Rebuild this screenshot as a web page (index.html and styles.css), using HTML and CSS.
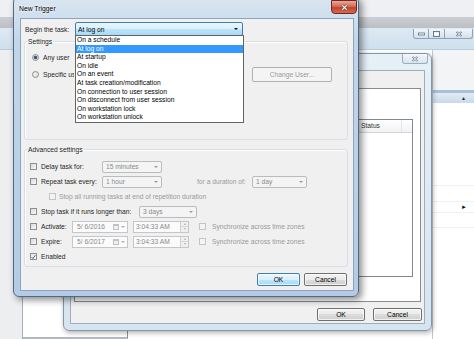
FILE: index.html
```html
<!DOCTYPE html>
<html lang="en">
<head>
  <meta charset="UTF-8" />
  <meta name="viewport" content="width=device-width, initial-scale=1.0" />
  <title>New Trigger</title>
  <link rel="stylesheet" href="styles.css">
</head>
<body>

  <div class="desktop">

    <!-- main scheduler window at the back -->
    <div class="main-win">
      <div class="main-top"></div>
      <div class="main-strip"></div>
      <div class="main-title">
        <div class="caption">
          <span class="cap-btn cap-min">
            <svg width="7" height="4" viewBox="0 0 7 4"><rect x="0.5" y="1" width="6" height="2" fill="#fff" stroke="#5d6f82" stroke-width="0.8"/></svg>
          </span>
          <span class="cap-btn cap-max">
            <svg width="7" height="6" viewBox="0 0 7 6"><rect x="0.5" y="0.5" width="6" height="5" fill="none" stroke="#5d6f82" stroke-width="0.9"/><rect x="1.5" y="1.8" width="4" height="2.8" fill="#fff"/></svg>
          </span>
          <span class="cap-btn cap-close">
            <svg width="8" height="6" viewBox="0 0 8 6"><path d="M1.5 0.8 L6.5 5.2 M6.5 0.8 L1.5 5.2" stroke="#5d6f82" stroke-width="1.6"/><path d="M1.5 0.8 L6.5 5.2 M6.5 0.8 L1.5 5.2" stroke="#fff" stroke-width="0.7"/></svg>
          </span>
        </div>
      </div>
      <div class="main-body">
        <div class="main-nav"></div>
        <div class="main-center">
          <div class="main-status"></div>
        </div>
        <div class="main-side">
          <div class="side-top"></div>
          <div class="side-head"><span class="side-up">&#9650;</span></div>
          <div class="side-list">
            <div class="side-row" style="height: 83px"></div>
            <div class="side-row" style="height: 16px"></div>
            <div class="side-row arrow-row" style="height: 11px"><span>&#9658;</span></div>
            <div class="side-row" style="height: 15px"></div>
          </div>
        </div>
      </div>
    </div>

    <!-- Create Task window -->
    <div class="task-win">
      <div class="task-title">
        <span class="task-close">
          <svg width="8" height="6" viewBox="0 0 8 6"><path d="M1.5 0.8 L6.5 5.2 M6.5 0.8 L1.5 5.2" stroke="#6b7c8e" stroke-width="1.6"/><path d="M1.5 0.8 L6.5 5.2 M6.5 0.8 L1.5 5.2" stroke="#fff" stroke-width="0.7"/></svg>
        </span>
      </div>
      <div class="task-client">
        <div class="tab-strip">
          <span class="tab">General</span>
          <span class="tab on">Triggers</span>
          <span class="tab">Actions</span>
        </div>
        <div class="tab-page">
          <div class="list-view">
            <div class="lv-head">
              <span class="lv-col c1">Trigger</span>
              <span class="lv-col c2">Details</span>
              <span class="lv-col c3">Status</span>
              <span class="lv-col c4"></span>
            </div>
          </div>
        </div>
        <div class="task-buttons">
          <button class="btn task-ok">OK</button>
          <button class="btn task-cancel">Cancel</button>
        </div>
      </div>
    </div>

    <!-- New Trigger dialog -->
    <div class="dialog">
      <div class="dlg-title">
        <span class="dlg-caption">New Trigger</span>
        <span class="dlg-close">
          <svg width="9" height="7" viewBox="0 0 9 7"><path d="M2 1 L7 6 M7 1 L2 6" stroke="#5a1d12" stroke-width="2.4"/><path d="M2 1 L7 6 M7 1 L2 6" stroke="#fff" stroke-width="1.2"/></svg>
        </span>
      </div>

      <div class="dlg-client">
        <div class="begin-row">
          <span class="begin-label">Begin the task:</span>
          <div class="combo focus">
            <span>At log on</span>
            <i class="arrow"></i>
          </div>
        </div>

        <fieldset class="group settings">
          <legend>Settings</legend>
          <div class="radio-row first">
            <span class="radio on"></span>
            <span>Any user</span>
          </div>
          <div class="radio-row second">
            <span class="radio"></span>
            <span class="clip-label">Specific user or group:</span>
            <button class="btn change-user" disabled>Change User...</button>
          </div>
        </fieldset>

        <fieldset class="group advanced">
          <legend>Advanced settings</legend>

          <div class="adv-row">
            <span class="check"></span>
            <span class="cb-label w-short">Delay task for:</span>
            <div class="combo off w60"><span>15 minutes</span><i class="arrow"></i></div>
          </div>

          <div class="adv-row">
            <span class="check"></span>
            <span class="cb-label w-short">Repeat task every:</span>
            <div class="combo off w60"><span>1 hour</span><i class="arrow"></i></div>
            <span class="dim duration-label">for a duration of:</span>
            <div class="combo off w55"><span>1 day</span><i class="arrow"></i></div>
          </div>

          <div class="adv-row indent">
            <span class="check off"></span>
            <span class="cb-label dim tight">Stop all running tasks at end of repetition duration</span>
          </div>

          <div class="adv-row">
            <span class="check"></span>
            <span class="cb-label w-long">Stop task if it runs longer than:</span>
            <div class="combo off w58"><span>3 days</span><i class="arrow"></i></div>
          </div>

          <div class="adv-row">
            <span class="check"></span>
            <span class="cb-label w-date">Activate:</span>
            <div class="field date"><span>5/ 6/2016</span><i class="cal"></i><i class="arrow"></i></div>
            <div class="field time"><span>3:04:33 AM</span><i class="spin"><b></b><b class="down"></b></i></div>
            <span class="check off sync"></span>
            <span class="dim sync-label">Synchronize across time zones</span>
          </div>

          <div class="adv-row">
            <span class="check"></span>
            <span class="cb-label w-date">Expire:</span>
            <div class="field date"><span>5/ 6/2017</span><i class="cal"></i><i class="arrow"></i></div>
            <div class="field time"><span>3:04:33 AM</span><i class="spin"><b></b><b class="down"></b></i></div>
            <span class="check off sync"></span>
            <span class="dim sync-label">Synchronize across time zones</span>
          </div>

          <div class="adv-row">
            <span class="check on">
              <svg width="6" height="6" viewBox="0 0 6 6"><path d="M0.8 3.2 L2.3 4.9 L5.3 0.8" fill="none" stroke="#3a4f86" stroke-width="1.1"/></svg>
            </span>
            <span class="cb-label">Enabled</span>
          </div>
        </fieldset>

        <div class="dlg-buttons">
          <button class="btn default">OK</button>
          <button class="btn">Cancel</button>
        </div>

        <ul class="dropdown">
          <li>On a schedule</li>
          <li class="sel">At log on</li>
          <li>At startup</li>
          <li>On idle</li>
          <li>On an event</li>
          <li>At task creation/modification</li>
          <li>On connection to user session</li>
          <li>On disconnect from user session</li>
          <li>On workstation lock</li>
          <li>On workstation unlock</li>
        </ul>
      </div>
    </div>

  </div>

</body>
</html>
```

FILE: styles.css
```css
* {
  box-sizing: border-box;
}

body {
  margin: 0;
  width: 474px;
  height: 339px;
  overflow: hidden;
  font-family: "Liberation Sans", Arial, sans-serif;
  font-size: 6.7px;
  color: #1e1e1e;
  background: #f0f0f0;
}

.desktop {
  position: relative;
  width: 474px;
  height: 339px;
  overflow: hidden;
}

/* ---------- buttons ---------- */

.btn {
  font: inherit;
  height: 13px;
  width: 43px;
  padding: 0;
  color: #000;
  white-space: nowrap;
  border: 1px solid #707070;
  border-radius: 2px;
  background: linear-gradient(#f2f2f2 0%, #ebebeb 50%, #dddddd 50%, #cfcfcf 100%);
  box-shadow: inset 0 0 0 1px rgba(255, 255, 255, 0.7);
}

.btn.default {
  border-color: #3c7fb1;
  background: linear-gradient(#eaf6fd 0%, #d9f0fc 50%, #bee6fd 50%, #a7d9f5 100%);
}

.btn:disabled {
  border-color: #adb2b5;
  background: #f4f4f4;
  color: #9a9a9a;
  box-shadow: none;
}

/* ---------- main window (back) ---------- */

.main-win {
  position: absolute;
  inset: 0;
  display: flex;
  flex-direction: column;
  background: #f0f0f0;
}

.main-top {
  height: 17px;
  flex: none;
  background: #eef0f3;
}

.main-strip {
  height: 11px;
  flex: none;
  background: linear-gradient(#cbced2, #bcc0c5);
}

.main-title {
  height: 22px;
  flex: none;
  display: flex;
  justify-content: flex-end;
  align-items: flex-start;
  background: linear-gradient(#dde9f3, #cfe0ee);
  border-bottom: 1px solid #b9cadb;
}

.caption {
  display: flex;
  margin: 1px 1px 0 0;
}

.cap-btn {
  height: 10px;
  display: flex;
  align-items: center;
  justify-content: center;
  border: 1px solid #8ea3b8;
  border-top: none;
  background: linear-gradient(#f0f5fa, #d3e1ec);
}

.cap-min {
  width: 16px;
  border-radius: 0 0 0 3px;
}

.cap-max {
  width: 16px;
  border-left: none;
}

.cap-close {
  width: 28px;
  border-left: none;
  border-radius: 0 0 3px 0;
}

.main-body {
  flex: 1;
  display: flex;
}

.main-nav {
  width: 23px;
  background: #eceef0;
  border-right: 1px solid #a9adb2;
}

.main-center {
  flex: 1;
  display: flex;
  flex-direction: column;
  background: #fff;
}

.main-status {
  margin-top: auto;
  width: 105px;
  height: 9px;
  border-right: 1px solid #8d9195;
  border-bottom: 2px solid #b5b9bd;
}

.main-side {
  width: 42px;
  display: flex;
  flex-direction: column;
  border-left: 1px solid #c3c9cf;
}

.side-top {
  height: 40px;
  background: #f2f4f6;
}

.side-head {
  height: 13px;
  display: flex;
  justify-content: flex-end;
  align-items: center;
  padding-right: 8px;
  background: linear-gradient(#e3ecf6, #c9d9ea);
  border-top: 3px solid #a9c0da;
}

.side-up {
  font-size: 5px;
  color: #1b2b3b;
}

.side-list {
  flex: 1;
  background: #fff;
}

.side-row {
  border-bottom: 1px solid #eef0f2;
}

.arrow-row {
  display: flex;
  justify-content: flex-end;
  align-items: center;
  padding-right: 7px;
  font-size: 6px;
  color: #111;
}

/* ---------- Create Task window ---------- */

.task-win {
  position: absolute;
  left: 63px;
  top: 53px;
  width: 369px;
  height: 278px;
  display: flex;
  flex-direction: column;
  padding: 0 6px 6px 6px;
  border: 1px solid #8196ab;
  border-radius: 6px;
  background: linear-gradient(#e6f0f7, #d6e4ef);
  box-shadow: 1px 2px 5px rgba(0, 0, 0, 0.3);
}

.task-title {
  height: 16px;
  flex: none;
  display: flex;
  justify-content: flex-end;
  align-items: flex-start;
}

.task-close {
  width: 26px;
  height: 10px;
  margin-right: -3px;
  display: flex;
  align-items: center;
  justify-content: center;
  border: 1px solid #9aacbe;
  border-top: none;
  border-radius: 0 0 3px 3px;
  background: linear-gradient(#f2f7fa, #d9e5ee);
}

.task-client {
  flex: 1;
  display: flex;
  flex-direction: column;
  padding: 0 3px;
  background: #f0f0f0;
  border: 1px solid #a0adba;
}

.tab-strip {
  height: 17px;
  flex: none;
  display: flex;
  align-items: flex-end;
  padding-left: 2px;
}

.tab {
  height: 13px;
  padding: 2px 6px 0;
  border: 1px solid #898c95;
  border-bottom: none;
  background: linear-gradient(#f2f2f2, #e0e0e0);
}

.tab.on {
  height: 15px;
  background: #fff;
}

.tab-page {
  height: 214px;
  flex: none;
  padding: 30px 7px 0 7px;
  background: #fff;
  border: 1px solid #898c95;
}

.list-view {
  height: 158px;
  border: 1px solid #828790;
  background: #fff;
}

.lv-head {
  height: 13px;
  display: flex;
  background: linear-gradient(#ffffff, #f1f2f4);
  border-bottom: 1px solid #d5d5d5;
}

.lv-col {
  line-height: 12px;
  padding-left: 2px;
  border-right: 1px solid #e3e4e6;
  color: #333;
}

.lv-col.c1 {
  width: 190px;
}

.lv-col.c2 {
  width: 86px;
}

.lv-col.c3 {
  width: 43px;
}

.lv-col.c4 {
  flex: 1;
  border-right: none;
}

.task-buttons {
  display: flex;
  justify-content: flex-end;
  gap: 8px;
  margin: 6px -1px 0 0;
}

.btn.task-ok {
  width: 48px;
}

.btn.task-cancel {
  width: 49px;
}

/* ---------- New Trigger dialog ---------- */

.dialog {
  position: absolute;
  left: 13px;
  top: -4px;
  width: 346px;
  height: 301px;
  display: flex;
  flex-direction: column;
  padding: 0 4px 5px 6px;
  border: 1px solid #4f6987;
  border-radius: 6px;
  background: linear-gradient(#dae6f1 0%, #c2d6ea 15%, #b3cbe4 100%);
  box-shadow: 3px 3px 7px rgba(0, 0, 0, 0.45);
}

.dlg-title {
  height: 21px;
  flex: none;
  display: flex;
  justify-content: space-between;
  align-items: flex-start;
}

.dlg-caption {
  margin: 7px 0 0 -1px;
  font-size: 6.8px;
  line-height: 9px;
  color: #000;
  text-shadow: 0 0 3px #fff, 0 0 3px #fff;
}

.dlg-close {
  width: 26px;
  height: 14px;
  margin: 3px -3px 0 0;
  display: flex;
  align-items: center;
  justify-content: center;
  border: 1px solid #6b2b22;
  border-radius: 0 0 4px 4px;
  background: linear-gradient(#eba898 0%, #d4624c 50%, #c2432c 55%, #d66a4c 100%);
}

.dlg-client {
  position: relative;
  flex: 1;
  display: flex;
  flex-direction: column;
  padding: 3px 5px 0 3px;
  background: #f0f0f0;
  border: 1px solid #8da4bc;
}

.begin-row {
  display: flex;
  align-items: center;
  height: 14px;
}

.begin-label {
  width: 51px;
  padding-left: 1px;
}

.group {
  margin: 0;
  min-width: 0;
  padding: 0 0 0 5px;
  border: 1px solid #d5dfe5;
  border-radius: 3px;
  box-shadow: inset 1px 1px 0 #fff;
}

.group legend {
  margin-left: -3px;
  padding: 0 1px;
  line-height: 9px;
}

.settings {
  margin-top: 1px;
  height: 103px;
}

.radio-row {
  display: flex;
  align-items: center;
  gap: 4px;
  padding-left: 2px;
}

.radio-row.first {
  height: 13px;
  margin-top: 5px;
}

.radio-row.second {
  height: 15px;
  margin-top: 3px;
}

.clip-label {
  width: 31px;
  overflow: hidden;
  white-space: nowrap;
}

.radio {
  width: 7px;
  height: 7px;
  flex: none;
  border: 1px solid #8e8f8f;
  border-radius: 50%;
  background: radial-gradient(circle at 40% 40%, #f4f4f4, #d3d3d3);
}

.radio.on {
  background: radial-gradient(circle, #2d4770 0, #4d6a8e 1.6px, #e9e9e9 2.2px);
}

.btn.change-user {
  margin: 0 15px 0 auto;
  width: 80px;
  height: 15px;
}

.advanced {
  margin-top: 5px;
  padding-top: 5px;
  padding-bottom: 2px;
}

.adv-row {
  display: flex;
  align-items: center;
  height: 15px;
}

.adv-row.indent {
  padding-left: 19px;
}

.check {
  width: 7px;
  height: 7px;
  flex: none;
  display: flex;
  align-items: center;
  justify-content: center;
  border: 1px solid #8e8f8f;
  background: linear-gradient(135deg, #d9d9d9, #f8f8f8);
}

.check.off {
  border-color: #c5c5c5;
  background: #f4f4f4;
}

.check.on {
  background: linear-gradient(135deg, #e4e4e4, #ffffff);
}

.cb-label {
  margin-left: 4px;
  white-space: nowrap;
}

.cb-label.tight {
  margin-left: 3px;
}

.w-short {
  width: 61px;
}

.w-long {
  width: 98px;
}

.w-date {
  width: 31px;
}

.dim {
  color: #9a9a9a;
  white-space: nowrap;
}

.duration-label {
  width: 55px;
  margin-left: 35px;
}

.combo {
  height: 12px;
  flex: none;
  display: flex;
  align-items: center;
  padding-left: 3px;
  border: 1px solid #b9bcbf;
  border-radius: 2px;
  background: #f4f4f4;
  color: #8a8a8a;
}

.combo .arrow {
  margin: 0 3px 0 auto;
}

.arrow {
  width: 0;
  height: 0;
  border-left: 2px solid transparent;
  border-right: 2px solid transparent;
  border-top: 2.5px solid #9a9a9a;
}

.combo.focus {
  width: 168px;
  height: 14px;
  padding-left: 2px;
  border-color: #3c7fb1;
  background: linear-gradient(#eaf6fd 0%, #d9f0fc 50%, #bee6fd 50%, #a7d9f5 100%);
  color: #000;
}

.combo.focus .arrow {
  border-top-color: #111;
  margin-right: 4px;
}

.w60 {
  width: 60px;
}

.w55 {
  width: 55px;
}

.w58 {
  width: 58px;
}

.field {
  width: 56px;
  height: 12px;
  flex: none;
  display: flex;
  align-items: center;
  padding-left: 4px;
  border: 1px solid #c3c6ca;
  background: #fbfbfb;
  color: #8a8a8a;
}

.field.time {
  margin-left: 5px;
  padding-left: 2px;
}

.cal {
  width: 6px;
  height: 6px;
  margin: 0 2px 0 auto;
  border: 1px solid #c2c2c2;
  border-top-width: 2px;
  background: #f0f0f0;
}

.field .arrow {
  margin-right: 2px;
  border-top-color: #b0b0b0;
}

.spin {
  margin-left: auto;
  width: 8px;
  height: 10px;
  display: flex;
  flex-direction: column;
  border-left: 1px solid #d0d0d0;
}

.spin b {
  flex: 1;
  display: flex;
  align-items: center;
  justify-content: center;
  border-bottom: 1px solid #d8d8d8;
  background: #f0f0f0;
}

.spin b::after {
  content: "";
  border-left: 1.5px solid transparent;
  border-right: 1.5px solid transparent;
  border-bottom: 2px solid #b0b0b0;
}

.spin b.down {
  border-bottom: none;
}

.spin b.down::after {
  border-bottom: none;
  border-top: 2px solid #b0b0b0;
}

.check.sync {
  margin-left: 10px;
}

.sync-label {
  margin-left: 6px;
}

.dlg-buttons {
  display: flex;
  justify-content: flex-end;
  gap: 4px;
  margin: 6px 1px 0 0;
}

.dropdown {
  position: absolute;
  left: 54px;
  top: 16px;
  width: 169px;
  margin: 0;
  padding: 0;
  list-style: none;
  background: #fff;
  border: 1px solid #646464;
}

.dropdown li {
  height: 8.6px;
  line-height: 8.6px;
  padding-left: 1px;
  white-space: nowrap;
  color: #000;
}

.dropdown li.sel {
  background: #3399ff;
  color: #fff;
}
```
